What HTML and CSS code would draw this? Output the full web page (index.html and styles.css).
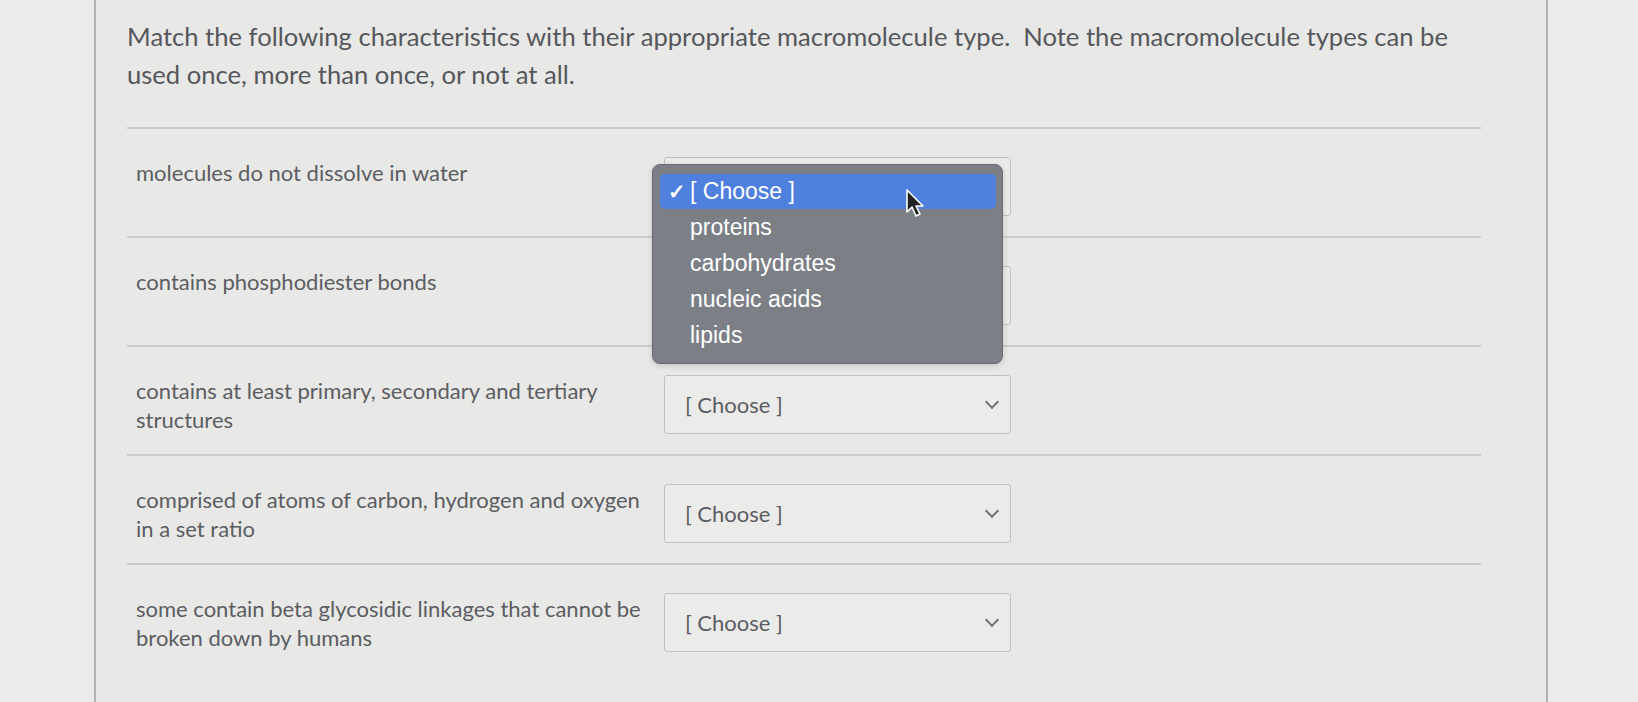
FILE: index.html
```html
<!DOCTYPE html>
<html>
<head>
<meta charset="utf-8">
<link rel="stylesheet" href="styles.css">
</head>
<body>
<div class="page">
  <div class="side-left"></div>
  <main class="panel">
    <p class="question">Match the following characteristics with their appropriate macromolecule type.&nbsp; Note the macromolecule types can be used once, more than once, or not at all.</p>
    <div class="rows">
      <div class="row">
        <div class="label">molecules do not dissolve in water</div>
        <div class="select-wrap">
          <div class="select"><span>[ Choose ]</span><span class="chev"></span></div>
          <div class="menu">
            <div class="item active"><span class="check">✓</span>[ Choose ]</div>
            <div class="item">proteins</div>
            <div class="item">carbohydrates</div>
            <div class="item">nucleic acids</div>
            <div class="item">lipids</div>
            <svg class="cursor" width="22" height="30" viewBox="0 0 22 30"><path d="M2 1 L2 23 L7 18 L11 27 L15 25 L11 17 L18 17 Z" fill="#222" stroke="#fff" stroke-width="1.6" stroke-linejoin="round"/></svg>
          </div>
        </div>
      </div>
      <div class="row">
        <div class="label">contains phosphodiester bonds</div>
        <div class="select-wrap"><div class="select"><span>[ Choose ]</span><span class="chev"></span></div></div>
      </div>
      <div class="row">
        <div class="label">contains at least primary, secondary and tertiary structures</div>
        <div class="select-wrap"><div class="select"><span>[ Choose ]</span><span class="chev"></span></div></div>
      </div>
      <div class="row">
        <div class="label">comprised of atoms of carbon, hydrogen and oxygen in a set ratio</div>
        <div class="select-wrap"><div class="select"><span>[ Choose ]</span><span class="chev"></span></div></div>
      </div>
      <div class="row last">
        <div class="label">some contain beta glycosidic linkages that cannot be broken down by humans</div>
        <div class="select-wrap"><div class="select"><span>[ Choose ]</span><span class="chev"></span></div></div>
      </div>
    </div>
  </main>
  <div class="side-right"></div>
</div>
</body>
</html>
```
FILE: styles.css
```css
html, body {
  margin: 0;
  padding: 0;
  background: #e9e9e7;
  font-family: Lato, "Open Sans", sans-serif;
}
.page {
  display: flex;
  width: 1638px;
  height: 702px;
  overflow: hidden;
}
.side-left {
  width: 94px;
  flex: none;
  background: #ebebea;
  border-right: 2px solid #b3b3b3;
}
.panel {
  width: 1383px;
  flex: none;
  padding: 17px 36px 0 31px;
  border-right: 2px solid #b3b3b3;
  background: #e8e8e6;
}
.side-right {
  flex: 1;
  background: #ebebe9;
}
.question {
  margin: 0;
  font-size: 25.6px;
  line-height: 38px;
  color: #55575c;
  padding-bottom: 34px;
  border-bottom: 2px solid #c9c9c7;
  width: 1354px;
}
.rows {
  width: 1354px;
}
.row {
  display: flex;
  align-items: flex-start;
  padding-top: 29px;
  box-sizing: border-box;
  border-bottom: 2px solid #cbcbc9;
  height: 109px;
}
.row.last {
  border-bottom: none;
}
.label {
  width: 514px;
  padding-left: 9px;
  margin-top: 0;
  font-size: 22px;
  line-height: 29px;
  color: #5b5d62;
}
.select-wrap {
  position: relative;
  margin-left: 14px;
}
.select {
  width: 347px;
  height: 59px;
  margin-top: -1px;
  box-sizing: border-box;
  border: 1px solid #c1c1bf;
  border-radius: 3px;
  background: #ebebea;
  display: flex;
  align-items: center;
  justify-content: space-between;
  padding: 0 13px 0 20px;
  font-size: 22px;
  color: #5b5d62;
}
.chev {
  width: 8px;
  height: 8px;
  border-right: 2px solid #6e7074;
  border-bottom: 2px solid #6e7074;
  transform: rotate(45deg);
  margin-top: -6px;
}
.menu {
  position: absolute;
  z-index: 10;
  left: -12px;
  top: 6px;
  width: 351px;
  box-sizing: border-box;
  padding: 9px 6px 10px 7px;
  background: #7c7f86;
  border: 1px solid #686b71;
  border-radius: 8px;
  box-shadow: 0 2px 6px rgba(0,0,0,0.15);
  font-family: "Liberation Sans", Arimo, sans-serif;
  font-size: 23px;
  color: #ffffff;
}
.item {
  height: 36px;
  line-height: 36px;
  padding-left: 30px;
  position: relative;
}
.item.active {
  background: #4f80de;
  border-radius: 5px;
  padding-left: 8px;
  height: 35px;
  line-height: 35px;
}
.check {
  display: inline-block;
  width: 22px;
  font-size: 21px;
  font-weight: bold;
}
.cursor {
  position: absolute;
  left: 252px;
  top: 24px;
}
```
